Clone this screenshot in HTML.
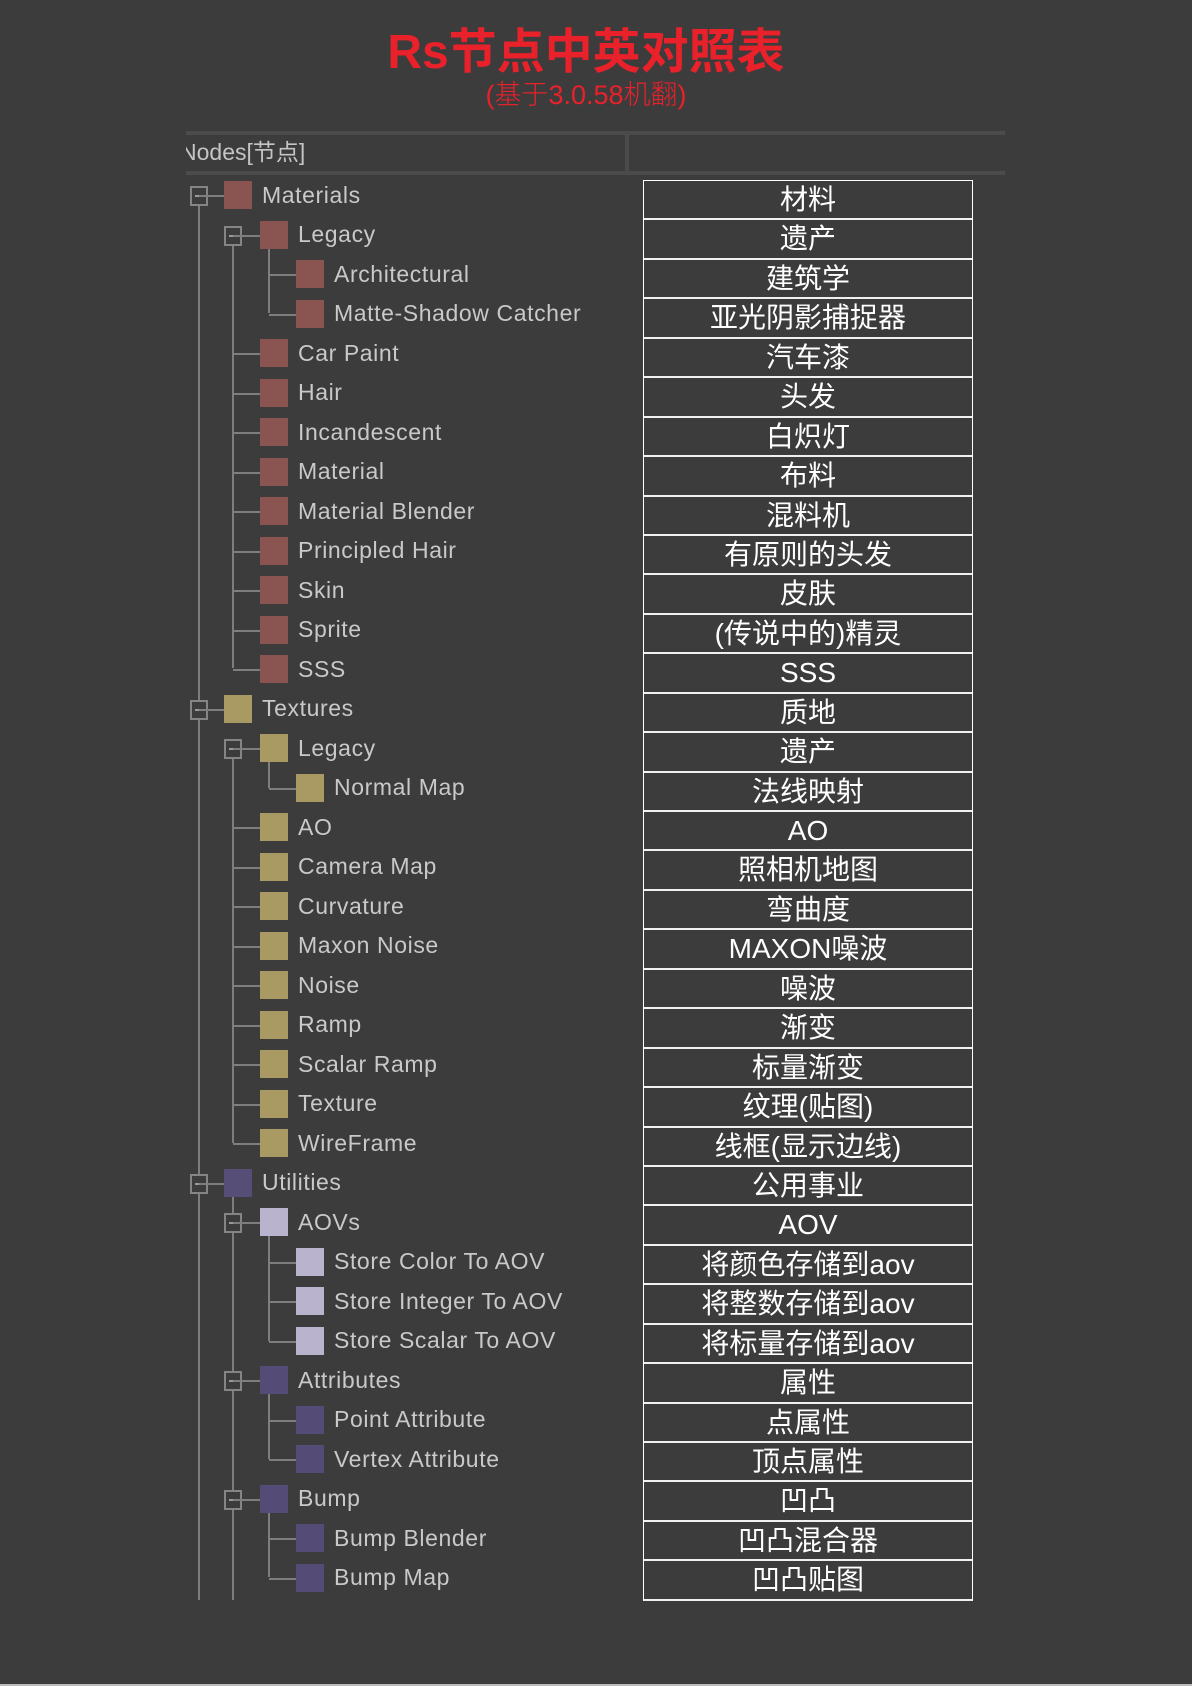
<!DOCTYPE html>
<html><head><meta charset="utf-8"><style>
body{margin:0;background:#3c3c3c;}
#p{position:relative;width:1192px;height:1686px;background:#3c3c3c;overflow:hidden;font-family:"Liberation Sans","Noto Sans CJK SC",sans-serif;border-bottom:2px solid #bbb;box-sizing:border-box}
.t1{position:absolute;left:0;width:1172px;top:22px;text-align:center;color:#e8212a;font-weight:bold;font-size:48px;line-height:62px;letter-spacing:0px}
.t2{position:absolute;left:0;width:1172px;top:78px;text-align:center;color:#e8212a;font-size:27px;line-height:34px;font-weight:300}
.hl{position:absolute;left:186px;width:819px;height:4px;background:#4b4b4b}
.hd{position:absolute;left:186px;top:134px;width:440px;height:36px;overflow:hidden;color:#c4c4c4;font-size:23px;line-height:36px;text-indent:-6px}
.vd{position:absolute;left:625px;top:134px;width:4px;height:40px;background:#4b4b4b}
.r{position:absolute;top:calc(175px + var(--i)*39.5px);height:40px;display:flex;align-items:center;color:#c9c9c9;font-size:23px;letter-spacing:0.6px;white-space:nowrap}
.r::before{content:"";position:absolute;left:-27px;width:27px;top:20px;height:2px;background:#7e7e7e}
.r.l0::before{left:-25px;width:25px}
.l0{left:224px}.l1{left:260px}.l2{left:296px}
.s{width:28px;height:28px;margin-right:10px;flex:none}
.m{background:#8a5550}.tx{background:#a89a62}.u{background:#574e78}.a{background:#bab3cd}.d{background:#554b77}
.x{position:absolute;top:calc(186px + var(--i)*39.5px);width:14px;height:16px;border:2px solid #858585;background:#3c3c3c}
.x::after{content:"";position:absolute;left:3px;right:3px;top:7px;height:2px;background:#9a9a9a}
.v{position:absolute;width:2px;background:#7e7e7e}
.tb{position:absolute;left:643px;top:180px;width:328px;border:1px solid #fff;border-bottom:none}
.c{height:39.44px;box-sizing:border-box;border-bottom:2px solid #f0f0f0;color:#fff;text-align:center;font-size:28px;line-height:38px;font-family:"Liberation Sans","Noto Sans CJK SC",sans-serif}
</style></head><body><div id="p">
<div class="t1">Rs节点中英对照表</div>
<div class="t2">(基于3.0.58机翻)</div>
<div class="hl" style="top:131px"></div>
<div class="hl" style="top:171px"></div>
<div class="vd"></div>
<div class="hd">Nodes[节点]</div>

<div class="v" style="left:198px;top:195px;height:1405px"></div>
<div class="v" style="left:232px;top:234px;height:434px"></div>
<div class="v" style="left:232px;top:748px;height:395px"></div>
<div class="v" style="left:232px;top:1182px;height:418px"></div>
<div class="v" style="left:268px;top:234px;height:79px"></div>
<div class="v" style="left:268px;top:748px;height:40px"></div>
<div class="v" style="left:268px;top:1222px;height:119px"></div>
<div class="v" style="left:268px;top:1380px;height:79px"></div>
<div class="v" style="left:268px;top:1498px;height:79px"></div>

<div class="x" style="--i:0;left:190px"></div>
<div class="x" style="--i:1;left:224px"></div>
<div class="x" style="--i:13;left:190px"></div>
<div class="x" style="--i:14;left:224px"></div>
<div class="x" style="--i:25;left:190px"></div>
<div class="x" style="--i:26;left:224px"></div>
<div class="x" style="--i:30;left:224px"></div>
<div class="x" style="--i:33;left:224px"></div>

<div class="r l0" style="--i:0"><span class="s m"></span>Materials</div>
<div class="r l1" style="--i:1"><span class="s m"></span>Legacy</div>
<div class="r l2" style="--i:2"><span class="s m"></span>Architectural</div>
<div class="r l2" style="--i:3"><span class="s m"></span>Matte-Shadow Catcher</div>
<div class="r l1" style="--i:4"><span class="s m"></span>Car Paint</div>
<div class="r l1" style="--i:5"><span class="s m"></span>Hair</div>
<div class="r l1" style="--i:6"><span class="s m"></span>Incandescent</div>
<div class="r l1" style="--i:7"><span class="s m"></span>Material</div>
<div class="r l1" style="--i:8"><span class="s m"></span>Material Blender</div>
<div class="r l1" style="--i:9"><span class="s m"></span>Principled Hair</div>
<div class="r l1" style="--i:10"><span class="s m"></span>Skin</div>
<div class="r l1" style="--i:11"><span class="s m"></span>Sprite</div>
<div class="r l1" style="--i:12"><span class="s m"></span>SSS</div>
<div class="r l0" style="--i:13"><span class="s tx"></span>Textures</div>
<div class="r l1" style="--i:14"><span class="s tx"></span>Legacy</div>
<div class="r l2" style="--i:15"><span class="s tx"></span>Normal Map</div>
<div class="r l1" style="--i:16"><span class="s tx"></span>AO</div>
<div class="r l1" style="--i:17"><span class="s tx"></span>Camera Map</div>
<div class="r l1" style="--i:18"><span class="s tx"></span>Curvature</div>
<div class="r l1" style="--i:19"><span class="s tx"></span>Maxon Noise</div>
<div class="r l1" style="--i:20"><span class="s tx"></span>Noise</div>
<div class="r l1" style="--i:21"><span class="s tx"></span>Ramp</div>
<div class="r l1" style="--i:22"><span class="s tx"></span>Scalar Ramp</div>
<div class="r l1" style="--i:23"><span class="s tx"></span>Texture</div>
<div class="r l1" style="--i:24"><span class="s tx"></span>WireFrame</div>
<div class="r l0" style="--i:25"><span class="s u"></span>Utilities</div>
<div class="r l1" style="--i:26"><span class="s a"></span>AOVs</div>
<div class="r l2" style="--i:27"><span class="s a"></span>Store Color To AOV</div>
<div class="r l2" style="--i:28"><span class="s a"></span>Store Integer To AOV</div>
<div class="r l2" style="--i:29"><span class="s a"></span>Store Scalar To AOV</div>
<div class="r l1" style="--i:30"><span class="s d"></span>Attributes</div>
<div class="r l2" style="--i:31"><span class="s d"></span>Point Attribute</div>
<div class="r l2" style="--i:32"><span class="s d"></span>Vertex Attribute</div>
<div class="r l1" style="--i:33"><span class="s d"></span>Bump</div>
<div class="r l2" style="--i:34"><span class="s d"></span>Bump Blender</div>
<div class="r l2" style="--i:35"><span class="s d"></span>Bump Map</div>

<div class="tb">
<div class="c">材料</div><div class="c">遗产</div><div class="c">建筑学</div><div class="c">亚光阴影捕捉器</div>
<div class="c">汽车漆</div><div class="c">头发</div><div class="c">白炽灯</div><div class="c">布料</div>
<div class="c">混料机</div><div class="c">有原则的头发</div><div class="c">皮肤</div><div class="c">(传说中的)精灵</div>
<div class="c">SSS</div><div class="c">质地</div><div class="c">遗产</div><div class="c">法线映射</div>
<div class="c">AO</div><div class="c">照相机地图</div><div class="c">弯曲度</div><div class="c">MAXON噪波</div>
<div class="c">噪波</div><div class="c">渐变</div><div class="c">标量渐变</div><div class="c">纹理(贴图)</div>
<div class="c">线框(显示边线)</div><div class="c">公用事业</div><div class="c">AOV</div><div class="c">将颜色存储到aov</div>
<div class="c">将整数存储到aov</div><div class="c">将标量存储到aov</div><div class="c">属性</div><div class="c">点属性</div>
<div class="c">顶点属性</div><div class="c">凹凸</div><div class="c">凹凸混合器</div><div class="c">凹凸贴图</div>
</div>
</div></body></html>
